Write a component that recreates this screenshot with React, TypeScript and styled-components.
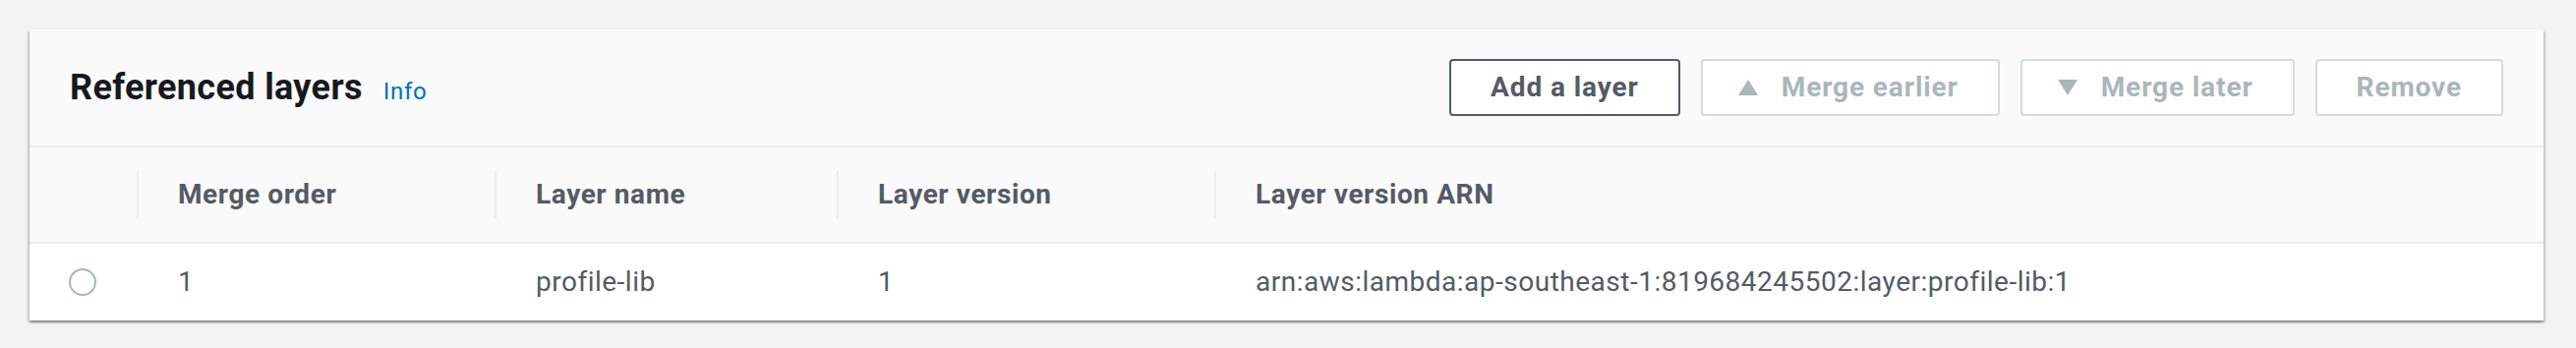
import React from 'react';
import styled, { createGlobalStyle } from 'styled-components';

const Global = createGlobalStyle`
  html, body {
    margin: 0;
    padding: 0;
    background: #f2f3f3;
  }
  body {
    font-family: Roboto, "Open Sans", Arial, sans-serif;
    -webkit-font-smoothing: antialiased;
  }
`;

const Page = styled.div`
  box-sizing: border-box;
  min-height: 354px;
  padding: 30px 33px 24px 30px;
  background: #f2f3f3;
`;

const Panel = styled.section`
  background: #ffffff;
  box-shadow: 0 2px 2px 0 rgba(0, 28, 36, 0.3), 2px 2px 2px 0 rgba(0, 28, 36, 0.15),
    -2px 2px 2px 0 rgba(0, 28, 36, 0.15);
`;

const Header = styled.header`
  display: flex;
  align-items: center;
  justify-content: space-between;
  height: 118px;
  padding: 0 41px 0 41px;
  background: #fafafa;
  border-bottom: 2px solid #eaeded;
`;

const TitleGroup = styled.div`
  display: flex;
  align-items: baseline;
  gap: 21px;
`;

const Title = styled.h2`
  margin: 0;
  font-size: 36px;
  line-height: 44px;
  font-weight: 700;
  letter-spacing: 0.35px;
  color: #16191f;
`;

const InfoLink = styled.a`
  font-size: 24px;
  line-height: 32px;
  font-weight: 400;
  letter-spacing: 0.7px;
  color: #0073bb;
  text-decoration: none;
  cursor: pointer;
`;

const Actions = styled.div`
  display: flex;
  align-items: center;
  gap: 21px;
`;

const Button = styled.button<{ $disabled?: boolean; $withIcon?: boolean }>`
  box-sizing: border-box;
  display: inline-flex;
  align-items: center;
  gap: 24px;
  height: 58px;
  padding: 0 40px 0 ${(p) => (p.$withIcon ? '36px' : '40px')};
  border: 2px solid ${(p) => (p.$disabled ? '#d5dbdb' : '#545b64')};
  border-radius: 4px;
  background: #ffffff;
  color: ${(p) => (p.$disabled ? '#aab7b8' : '#545b64')};
  font-family: inherit;
  font-size: 28px;
  line-height: 40px;
  font-weight: 700;
  letter-spacing: 0.9px;
  cursor: ${(p) => (p.$disabled ? 'default' : 'pointer')};
`;

const Caret = styled.svg`
  display: block;
  width: 20px;
  height: 16px;
  fill: #aab7b8;
`;

const columns = '109px 364px 348px 384px 1fr';

const HeadRow = styled.div`
  display: grid;
  grid-template-columns: ${columns};
  height: 96px;
  background: #fafafa;
  border-bottom: 2px solid #eaeded;
`;

const HeadCell = styled.div`
  display: flex;
  align-items: center;
`;

const Divider = styled.span`
  width: 2px;
  height: 48px;
  background: #eaeded;
`;

const HeadLabel = styled.span`
  margin-left: 40px;
  font-size: 28px;
  line-height: 40px;
  font-weight: 700;
  letter-spacing: 0.6px;
  color: #545b64;
`;

const BodyRow = styled.div`
  display: grid;
  grid-template-columns: ${columns};
  align-items: center;
  height: 78px;
  background: #ffffff;
`;

const BodyCell = styled.div<{ $first?: boolean }>`
  display: flex;
  align-items: center;
  padding-left: ${(p) => (p.$first ? '40px' : '42px')};
  font-size: 28px;
  line-height: 40px;
  font-weight: 400;
  letter-spacing: 0.5px;
  color: #545b64;
  white-space: nowrap;
`;

const Radio = styled.span`
  box-sizing: border-box;
  display: block;
  width: 28px;
  height: 28px;
  border: 2px solid #aab7b8;
  border-radius: 50%;
  background: #ffffff;
`;

const Up = () => (
  <Caret viewBox="0 0 20 16">
    <polygon points="10,0 20,16 0,16" />
  </Caret>
);

const Down = () => (
  <Caret viewBox="0 0 20 16">
    <polygon points="0,0 20,0 10,16" />
  </Caret>
);

const headers = ['Merge order', 'Layer name', 'Layer version', 'Layer version ARN'];
const row = ['1', 'profile-lib', '1', 'arn:aws:lambda:ap-southeast-1:819684245502:layer:profile-lib:1'];

export default function App() {
  return (
    <>
      <Global />
      <Page>
        <Panel>
          <Header>
            <TitleGroup>
              <Title>Referenced layers</Title>
              <InfoLink>Info</InfoLink>
            </TitleGroup>
            <Actions>
              <Button>Add a layer</Button>
              <Button $disabled $withIcon>
                <Up />
                Merge earlier
              </Button>
              <Button $disabled $withIcon>
                <Down />
                Merge later
              </Button>
              <Button $disabled>Remove</Button>
            </Actions>
          </Header>
          <HeadRow>
            <HeadCell />
            {headers.map((h) => (
              <HeadCell key={h}>
                <Divider />
                <HeadLabel>{h}</HeadLabel>
              </HeadCell>
            ))}
          </HeadRow>
          <BodyRow>
            <BodyCell $first>
              <Radio />
            </BodyCell>
            {row.map((c, i) => (
              <BodyCell key={i}>{c}</BodyCell>
            ))}
          </BodyRow>
        </Panel>
      </Page>
    </>
  );
}
